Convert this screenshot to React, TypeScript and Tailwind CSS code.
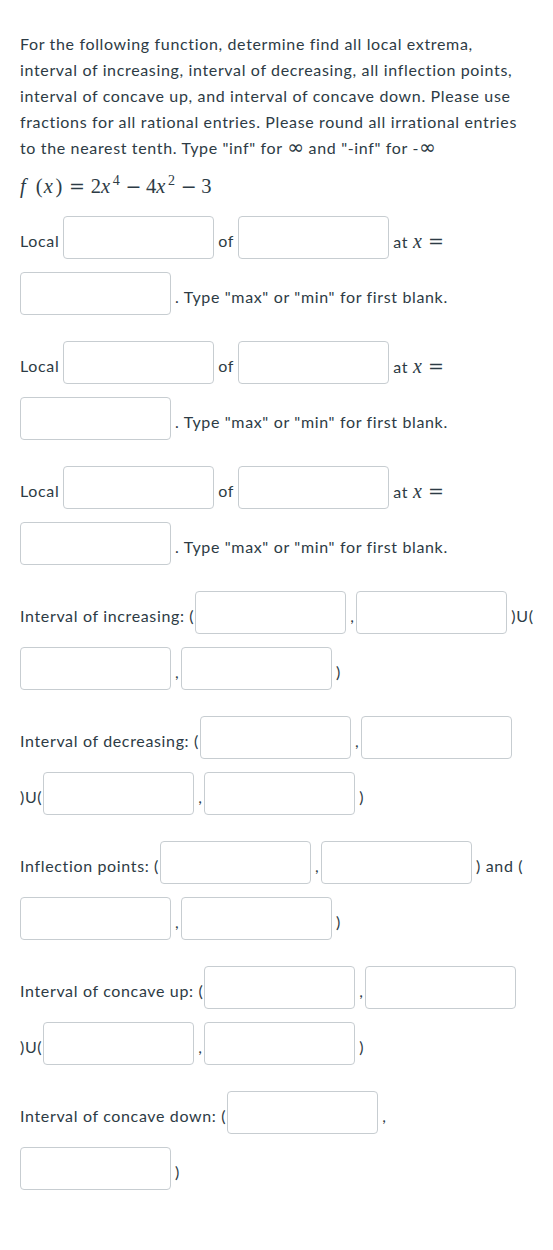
import React from "react";

const Inp = ({ className = "" }: { className?: string }) => (
  <input
    type="text"
    className={
      "w-[151px] h-[43px] shrink-0 rounded-[4px] border border-[#c7cdd1] bg-white " +
      className
    }
  />
);

const T = ({ children, className = "" }: { children: React.ReactNode; className?: string }) => (
  <span className={"mt-[13px] leading-6 whitespace-pre shrink-0 " + className}>{children}</span>
);

const Comma = () => (
  <span className="mt-[13px] leading-6 w-[10px] pl-[4px] shrink-0">,</span>
);

const AtX = () => (
  <span className="mt-[13px] h-6 leading-6 whitespace-pre shrink-0 ml-[4px] flex items-baseline">
    <span>at</span>
    <span className="ml-[5px] w-[11px] font-['Liberation_Serif',serif] italic text-[20px] leading-6 tracking-normal">x</span>
    <span className="ml-[4px] font-['DejaVu_Serif',serif] text-[19px] leading-6 tracking-normal">=</span>
  </span>
);

const Row = ({ children, className = "" }: { children: React.ReactNode; className?: string }) => (
  <div className={"flex items-start " + className}>{children}</div>
);

const LocalBlock = () => (
  <div className="mt-[26px] first:mt-0">
    <Row>
      <T>Local</T>
      <Inp className="ml-[4px]" />
      <T className="ml-[4px]">of</T>
      <Inp className="ml-[4px]" />
      <AtX />
    </Row>
    <Row className="mt-[13px]">
      <Inp />
      <T className="ml-[4px]">. Type "max" or "min" for first blank.</T>
    </Row>
  </div>
);

const Inf = () => (
  <span className="font-['DejaVu_Sans',sans-serif] text-[20px] leading-none tracking-normal">∞</span>
);

const M = "font-['Liberation_Serif',serif] text-[20.5px] leading-[30px] inline-block";
const Op = "font-['DejaVu_Serif',serif] text-[19px] leading-[30px] inline-block text-center";
const Sup = "font-['Liberation_Serif',serif] text-[14px] leading-[30px] inline-block relative -top-[8px]";

export default function App() {
  return (
    <div className="min-h-[1250px] bg-white px-[20px] pt-[31px] text-[16px] tracking-[0.65px] text-[#2d3b45] font-['Lato',sans-serif]">
      <p className="leading-[26px]">
        For the following function, determine find all local extrema,
        <br />
        interval of increasing, interval of decreasing, all inflection points,
        <br />
        interval of concave up, and interval of concave down. Please use
        <br />
        fractions for all rational entries. Please round all irrational entries
        <br />
        to the nearest tenth. Type "inf" for <Inf /> and "-inf" for -<Inf />
      </p>

      <div className="mt-[10px] h-[30px] flex items-baseline whitespace-pre tracking-normal">
        <span className={M + " italic w-[15.7px]"}>f</span>
        <span className={M + " w-[8px]"}>(</span>
        <span className={M + " italic w-[11.7px]"}>x</span>
        <span className={M + " w-[8px]"}>)</span>
        <span className={Op + " ml-[5.7px] w-[16px]"}>=</span>
        <span className={M + " ml-[5.7px] w-[10.25px]"}>2</span>
        <span className={M + " italic w-[11.7px]"}>x</span>
        <span className={Sup + " w-[8.2px]"}>4</span>
        <span className={Op + " ml-[4.55px] w-[16px]"}>−</span>
        <span className={M + " ml-[4.55px] w-[10.25px]"}>4</span>
        <span className={M + " italic w-[11.7px]"}>x</span>
        <span className={Sup + " w-[8.2px]"}>2</span>
        <span className={Op + " ml-[4.55px] w-[16px]"}>−</span>
        <span className={M + " ml-[4.55px] w-[10.25px]"}>3</span>
      </div>

      <div className="mt-[15px]">
        <LocalBlock />
        <LocalBlock />
        <LocalBlock />

        {/* Interval of increasing */}
        <div className="mt-[26px]">
          <Row>
            <T>Interval of increasing: (</T>
            <Inp className="ml-[1px]" />
            <Comma />
            <Inp />
            <T className="ml-[4px]">)U(</T>
          </Row>
          <Row className="mt-[13px]">
            <Inp />
            <Comma />
            <Inp />
            <T className="ml-[4px]">)</T>
          </Row>
        </div>

        {/* Interval of decreasing */}
        <div className="mt-[26px]">
          <Row>
            <T>Interval of decreasing: (</T>
            <Inp className="ml-[1px]" />
            <Comma />
            <Inp />
          </Row>
          <Row className="mt-[13px]">
            <T>)U(</T>
            <Inp className="ml-[1px]" />
            <Comma />
            <Inp />
            <T className="ml-[4px]">)</T>
          </Row>
        </div>

        {/* Inflection points */}
        <div className="mt-[26px]">
          <Row>
            <T>Inflection points: (</T>
            <Inp className="ml-[1px]" />
            <Comma />
            <Inp />
            <T className="ml-[4px]">) and (</T>
          </Row>
          <Row className="mt-[13px]">
            <Inp />
            <Comma />
            <Inp />
            <T className="ml-[4px]">)</T>
          </Row>
        </div>

        {/* Interval of concave up */}
        <div className="mt-[26px]">
          <Row>
            <T>Interval of concave up: (</T>
            <Inp className="ml-[1px]" />
            <Comma />
            <Inp />
          </Row>
          <Row className="mt-[13px]">
            <T>)U(</T>
            <Inp className="ml-[1px]" />
            <Comma />
            <Inp />
            <T className="ml-[4px]">)</T>
          </Row>
        </div>

        {/* Interval of concave down */}
        <div className="mt-[26px]">
          <Row>
            <T>Interval of concave down: (</T>
            <Inp className="ml-[1px]" />
            <Comma />
          </Row>
          <Row className="mt-[13px]">
            <Inp />
            <T className="ml-[4px]">)</T>
          </Row>
        </div>
      </div>
    </div>
  );
}
